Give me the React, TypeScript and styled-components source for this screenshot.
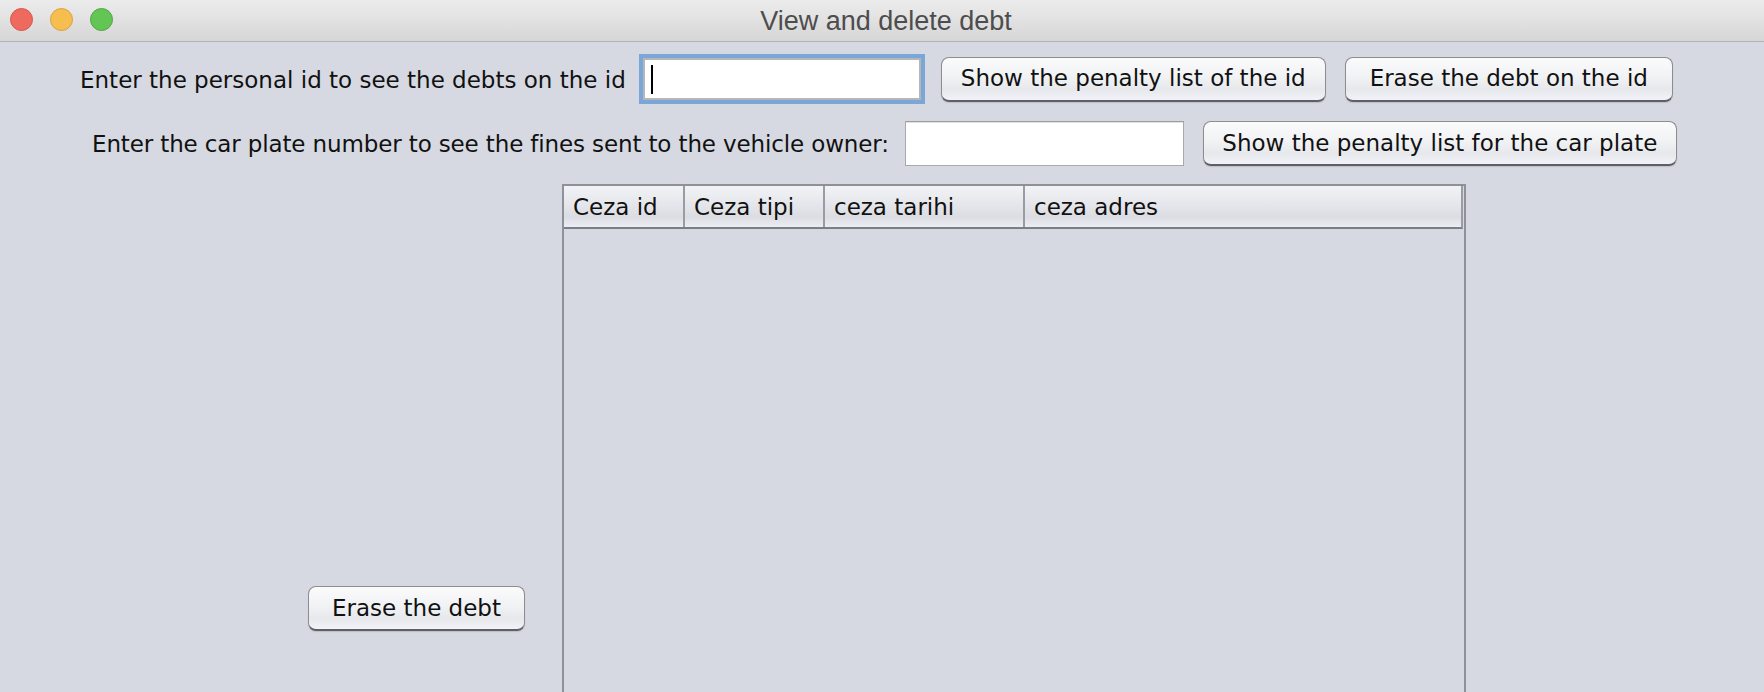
import styled, {createGlobalStyle} from "styled-components";

const GlobalStyle = createGlobalStyle`
  html, body {
    margin: 0;
    padding: 0;
    background: #d6d9e1;
  }
  body {
    font-family: "DejaVu Sans", "Liberation Sans", sans-serif;
    overflow: hidden;
  }
`;

const columns = [
    {title: 'Ceza id', width: 121},
    {title: 'Ceza tipi', width: 140},
    {title: 'ceza tarihi', width: 200},
    {title: 'ceza adres', width: 0},
];

export default function App() {
    return (
        <Window>
            <GlobalStyle/>
            <TitleBar>
                <Lights>
                    <Light $color="#ee6a5e" $edge="#d4574b"/>
                    <Light $color="#f5be4f" $edge="#d9a13e"/>
                    <Light $color="#62c554" $edge="#4fa840"/>
                </Lights>
                <Title>View and delete debt</Title>
            </TitleBar>

            <Content>
                <Row $left={80} $top={12} $height={50}>
                    <Label $spacing={0}>Enter the personal id to see the debts on the id</Label>
                    <FocusField $gap={13}>
                        <Caret/>
                    </FocusField>
                    <Button $width={385} $gap={16}>Show the penalty list of the id</Button>
                    <Button $width={328} $gap={19}>Erase the debt on the id</Button>
                </Row>

                <Row $left={92} $top={17} $height={45}>
                    <Label $spacing={-0.13}>Enter the car plate number to see the fines sent to the vehicle owner:</Label>
                    <Field $gap={16} $width={279}/>
                    <Button $width={474} $gap={19}>Show the penalty list for the car plate</Button>
                </Row>

                <Bottom>
                    <Side>
                        <Button $width={217} $gap={0}>Erase the debt</Button>
                    </Side>
                    <Table>
                        <HeaderRow>
                            {columns.map((c, i) =>
                                <HeaderCell key={c.title} $width={c.width} $last={i === columns.length - 1}>
                                    {c.title}
                                </HeaderCell>
                            )}
                        </HeaderRow>
                    </Table>
                </Bottom>
            </Content>
        </Window>
    );
}

const Window = styled.div`
  width: 1764px;
  height: 692px;
  background: #d6d9e1;
  overflow: hidden;
  display: flex;
  flex-direction: column;
`;

const TitleBar = styled.div`
  height: 41px;
  flex-shrink: 0;
  border-bottom: 1px solid #b3b3b3;
  background: linear-gradient(#ececec, #d6d6d6);
  display: flex;
  align-items: center;
  justify-content: center;
  position: relative;
`;

const Lights = styled.div`
  position: absolute;
  left: 10px;
  top: 8px;
  display: flex;
  gap: 17px;
`;

const Light = styled.div<{$color: string, $edge: string}>`
  width: 23px;
  height: 23px;
  border-radius: 50%;
  box-sizing: border-box;
  background: ${p => p.$color};
  border: 1px solid ${p => p.$edge};
`;

const Title = styled.div`
  font-family: "Liberation Sans", Arial, sans-serif;
  font-size: 27px;
  color: #4d4d4d;
  margin-left: 8px;
  margin-top: 2px;
`;

const Content = styled.div`
  flex: 1;
  display: flex;
  flex-direction: column;
`;

const Row = styled.div<{$left: number, $top: number, $height: number}>`
  display: flex;
  align-items: center;
  padding-left: ${p => p.$left}px;
  margin-top: ${p => p.$top}px;
  height: ${p => p.$height}px;
`;

const Label = styled.div<{$spacing: number}>`
  font-size: 23px;
  letter-spacing: ${p => p.$spacing}px;
  color: #111;
  white-space: nowrap;
  margin-top: 1px;
`;

const FocusField = styled.div<{$gap: number}>`
  margin-left: ${p => p.$gap}px;
  width: 286px;
  height: 50px;
  box-sizing: border-box;
  border: 4px solid #7aa7d8;
  box-shadow: inset 0 0 0 2px #b6b6b8;
  background: #fff;
  display: flex;
  align-items: center;
  padding-left: 8px;
`;

const Caret = styled.span`
  width: 2px;
  height: 29px;
  background: #000;
`;

const Field = styled.div<{$gap: number, $width: number}>`
  margin-left: ${p => p.$gap}px;
  width: ${p => p.$width}px;
  height: 45px;
  box-sizing: border-box;
  background: #fff;
  border: 1px solid #a9a9ab;
  border-top-color: #9c9c9e;
  box-shadow: inset 0 1px 0 #e3e3e3;
`;

const Button = styled.div<{$width: number, $gap: number}>`
  margin-left: ${p => p.$gap}px;
  width: ${p => p.$width}px;
  height: 45px;
  box-sizing: border-box;
  border: 1px solid #8d8d90;
  border-bottom: 2px solid #5f6066;
  border-radius: 8px;
  background: linear-gradient(#fbfbfc 0%, #f1f2f4 45%, #e7e8ec 75%, #f1f3f8 100%);
  box-shadow: 0 1px 1px rgba(0, 0, 0, 0.12);
  display: flex;
  align-items: center;
  justify-content: center;
  font-size: 23px;
  color: #111;
  white-space: nowrap;
  padding-bottom: 1px;
`;

const Bottom = styled.div`
  margin-top: 18px;
  flex: 1;
  display: flex;
`;

const Side = styled.div`
  width: 562px;
  box-sizing: border-box;
  padding-left: 308px;
  padding-top: 402px;
`;

const Table = styled.div`
  width: 904px;
  box-sizing: border-box;
  border: 2px solid #8f919a;
  border-bottom: none;
  height: 520px;
`;

const HeaderRow = styled.div`
  display: flex;
  height: 43px;
  box-sizing: border-box;
  border-bottom: 2px solid #7c7e86;
  border-right: 2px solid #9a9ca4;
  margin-right: 1px;
  background: linear-gradient(#f2f3f6 0%, #e4e5ea 50%, #dcdde3 75%, #eceef5 100%);
`;

const HeaderCell = styled.div<{$width: number, $last: boolean}>`
  ${p => p.$last ? 'flex: 1;' : `width: ${p.$width}px; border-right: 2px solid #9a9ca4;`}
  box-sizing: border-box;
  padding-left: 9px;
  display: flex;
  align-items: center;
  font-size: 23px;
  color: #111;
  white-space: nowrap;
`;
